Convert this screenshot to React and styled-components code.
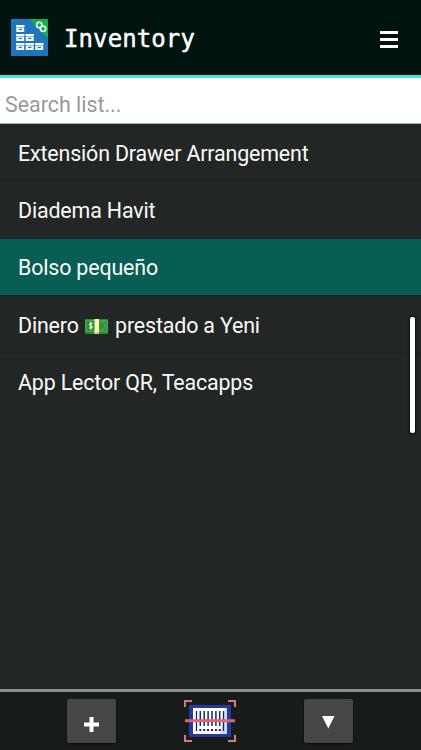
import React from "react";
import styled, { createGlobalStyle } from "styled-components";

const GlobalStyle = createGlobalStyle`
  * { box-sizing: border-box; }
  body { margin: 0; background: #222625; overflow: hidden; }
`;

const Screen = styled.main`
  position: relative;
  display: flex;
  flex-direction: column;
  width: 100%;
  height: 100vh;
  background: #222625;
  color: #fafafa;
  font-family: Roboto, sans-serif;
`;

const Header = styled.header`
  display: flex;
  align-items: center;
  flex: none;
  height: 78px;
  padding: 0 23px 0 11px;
  background: #011410;
  border-bottom: 3px solid #3fe5e5;
`;

const Title = styled.h1`
  flex: 1;
  margin: 2px 0 0 16px;
  font: 400 24px/32px "DejaVu Sans Mono", monospace;
  letter-spacing: 0.1px;
  -webkit-text-stroke: 0.45px #fff;
  color: #fff;
`;

const MenuButton = styled.button`
  display: flex;
  flex-direction: column;
  gap: 4px;
  width: 18px;
  margin-top: 4px;
  padding: 0;
  border: 0;
  background: none;
`;

const MenuBar = styled.span`
  height: 3px;
  background: #fff;
`;

const Search = styled.input`
  flex: none;
  width: 100%;
  height: 46px;
  padding: 8px 5px 0;
  border: 0;
  border-bottom: 1px solid #a9aeac;
  border-radius: 0;
  outline: 0;
  background: #fff;
  font: 400 21.4px Roboto, sans-serif;
  color: #333;
  &::placeholder { color: #999; opacity: 1; }
`;

const List = styled.ul`
  flex: 1;
  margin: 0;
  padding: 0;
  list-style: none;
`;

const Item = styled.li`
  display: flex;
  align-items: center;
  height: 57.3px;
  padding: 2px 18px 0 18px;
  border-bottom: 1px solid #1c201f;
  background: ${({ $selected }) => ($selected ? "#085e54" : "transparent")};
  font-size: 21.4px;
  letter-spacing: -0.15px;
  white-space: pre;
  &:last-child { border-bottom-color: transparent; }
`;

const ScrollThumb = styled.div`
  position: absolute;
  top: 317px;
  right: 6px;
  width: 5px;
  height: 116px;
  border-radius: 2px;
  background: #fff;
  box-shadow: 0 0 2px 1px #0b0e0d;
`;

const Footer = styled.footer`
  display: flex;
  justify-content: space-between;
  align-items: flex-start;
  flex: none;
  height: 61px;
  padding: 7px 68px 0 67px;
  border-top: 3px solid #8c908f;
  background: #171b1a;
`;

const ActionButton = styled.button`
  display: flex;
  align-items: center;
  justify-content: center;
  width: 49px;
  height: 44px;
  padding: 0;
  border: 0;
  border-radius: 2px;
  background: #464646;
  box-shadow: 0 1px 2px #0a0c0b;
`;

const ScanButton = styled(ActionButton)`
  width: 52px;
  background: none;
  box-shadow: none;
`;

const Icon = styled.svg`
  display: block;
  flex: none;
`;

const boxes = [[5, 6], [5, 15], [14.5, 15], [5, 24], [14.5, 24], [24, 24]];

function Logo() {
  return (
    <Icon width="37" height="37" viewBox="0 0 37 37">
      <path fill="#1e75bc" d="M0 0h37v37H0z" />
      <path fill="#1aad4b" d="M18 0h19v19z" />
      <g fill="none" stroke="#e9fff0" strokeWidth="1.6">
        <circle cx="28.3" cy="6" r="2.7" />
        <circle cx="32" cy="9.7" r="2.7" />
      </g>
      {boxes.map(([x, y]) => (
        <g key={`${x}-${y}`}>
          <path fill="#fff" d={`M${x} ${y}h8.5v2h-8.5zM${x + 0.3} ${y + 2.6}h7.9v4.5h-7.9z`} />
          <path fill="#1e75bc" d={`M${x + 2.5} ${y + 3.8}h3.5v1.3h-3.5z`} />
        </g>
      ))}
    </Icon>
  );
}

const Banknote = styled(Icon)`
  margin: 3px 2px 0 1px;
`;

function Cash() {
  return (
    <Banknote width="23" height="15" viewBox="0 0 23 15">
      <path fill="#31853a" d="M0 0h23v15H0z" />
      <path fill="#45a64b" d="M0 1h23v12H0z" />
      <path fill="#338e3b" d="M1.5 2.5h20v9h-20z" />
      <circle cx="16" cy="7" r="4.5" fill="#4ba552" />
      <circle cx="15.6" cy="7" r="3.5" fill="#348d3c" />
      <path fill="#fff0b8" d="M9.5 0h4.5v15H9.5z" />
      <path fill="#d8c778" d="M9.5 13h4.5v2H9.5z" />
      <path fill="none" stroke="#e5f8df" strokeWidth="1.2" d="M7.4 4.7C5.2 3.4 3.6 6 5.8 6.8S7.4 10 4.2 8.8M5.8 3v7.5" />
    </Banknote>
  );
}

function Scanner() {
  return (
    <Icon width="52" height="44" viewBox="0 0 52 44">
      <path fill="#26399b" d="M5 6h42v32H5z" />
      <path fill="#fff" d="M9 9h34v26H9z" />
      <path fill="#c9ddf8" d="M41 9h2v26h-7z" />
      <path stroke="#17265f" strokeWidth="1.3" d="M12.5 12v20M39.5 12v20" />
      <path stroke="#17265f" strokeWidth="1.5" d="M16.3 12v15M20.2 12v15M24.1 12v15M28 12v15M31.9 12v15M35.7 12v15" />
      <path stroke="#17265f" strokeWidth="2" d="M15.3 31h2M19.2 31h2M23.1 31h2M27 31h2M30.9 31h2M34.7 31h2" />
      <path stroke="#db6670" strokeWidth="3" d="M1 21.7h50" />
      <path fill="none" stroke="#d67880" strokeWidth="2" d="M1 8V2h7M44 2h7v6M51 36v6h-7M8 42H1v-6" />
    </Icon>
  );
}

const items = [
  { text: "Extensión Drawer Arrangement" },
  { text: "Diadema Havit" },
  { text: "Bolso pequeño", selected: true },
  { text: "Dinero ", icon: <Cash />, after: " prestado a Yeni" },
  { text: "App Lector QR, Teacapps" },
];

export default function App() {
  return (
    <Screen>
      <GlobalStyle />
      <Header>
        <Logo />
        <Title>Inventory</Title>
        <MenuButton aria-label="Menu"><MenuBar /><MenuBar /><MenuBar /></MenuButton>
      </Header>
      <Search placeholder="Search list..." />
      <List>
        {items.map(({ text, icon, after, selected }) => (
          <Item key={text} $selected={selected}>
            <span>{text}</span>{icon}{after && <span>{after}</span>}
          </Item>
        ))}
      </List>
      <ScrollThumb />
      <Footer>
        <ActionButton aria-label="Add">
          <Icon width="15" height="15" viewBox="0 0 15 15" transform="translate(0 3)">
            <path fill="#fff" d="M5.5 0h4v5.5H15v4H9.5V15h-4V9.5H0v-4h5.5z" />
          </Icon>
        </ActionButton>
        <ScanButton aria-label="Scan"><Scanner /></ScanButton>
        <ActionButton aria-label="More">
          <Icon width="13" height="13" viewBox="0 0 13 13" transform="translate(0 1)">
            <path fill="#fff" d="M0 0h12.5L6.3 12.5z" />
          </Icon>
        </ActionButton>
      </Footer>
    </Screen>
  );
}
